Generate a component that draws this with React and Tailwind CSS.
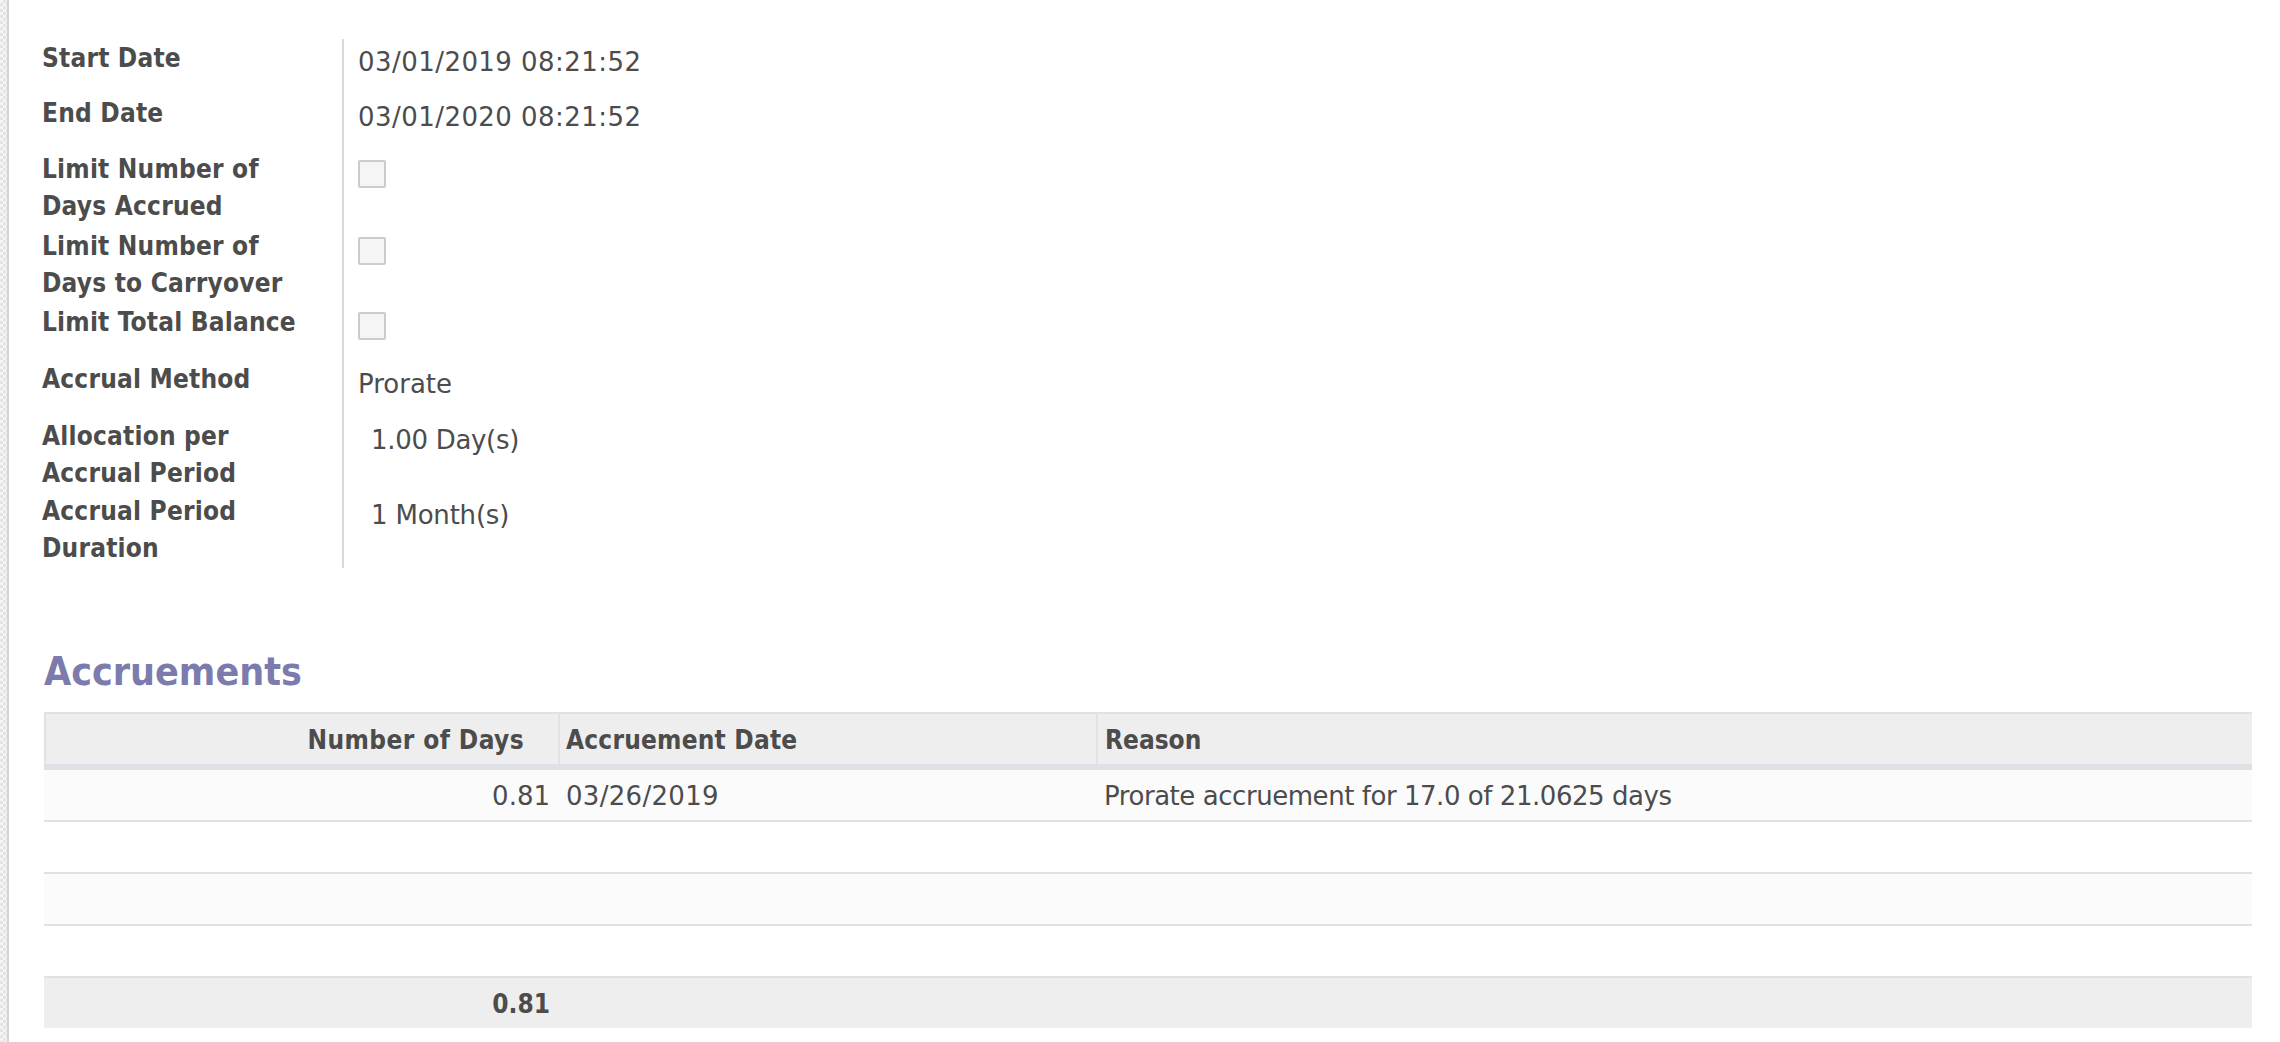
export default function App() {
  const boldFont = "font-['DejaVu_Sans_Condensed','DejaVu_Sans',sans-serif] font-bold";
  const rows = [
    { label: ['Start Date'], h: 'h-[55px]', value: <div className="pt-[5px] pl-[14px] tracking-[0.45px]">03/01/2019 08:21:52</div> },
    { label: ['End Date'], h: 'h-[56px]', value: <div className="pt-[5px] pl-[14px] tracking-[0.45px]">03/01/2020 08:21:52</div> },
    { label: ['Limit Number of', 'Days Accrued'], h: 'h-[77px]', value: <Checkbox mt="mt-[10px]" /> },
    { label: ['Limit Number of', 'Days to Carryover'], h: 'h-[76px]', value: <Checkbox mt="mt-[10px]" /> },
    { label: ['Limit Total Balance'], h: 'h-[57px]', value: <Checkbox mt="mt-[9px]" /> },
    { label: ['Accrual Method'], h: 'h-[57px]', value: <div className="pt-[6px] pl-[14px]">Prorate</div> },
    { label: ['Allocation per', 'Accrual Period'], h: 'h-[75px]', value: <div className="pt-[5px] pl-[27px] tracking-[-0.3px]">1.00 Day(s)</div> },
    { label: ['Accrual Period', 'Duration'], h: 'h-[76px]', value: <div className="pt-[5px] pl-[27px] tracking-[-0.2px]">1 Month(s)</div> },
  ];

  const bodyRows = [
    { bg: 'bg-[#fbfbfb]', days: '0.81', date: '03/26/2019', reason: 'Prorate accruement for 17.0 of 21.0625 days' },
    { bg: 'bg-white', days: '', date: '', reason: '' },
    { bg: 'bg-[#fbfbfb]', days: '', date: '', reason: '' },
    { bg: 'bg-white', days: '', date: '', reason: '' },
  ];

  return (
    <div className="flex min-h-[1042px] w-[2280px] bg-white text-[#4c4c4c] font-['DejaVu_Sans',sans-serif] text-[26px] leading-[37px]">
      <div className="w-[7px] shrink-0 bg-[repeating-conic-gradient(#e4e4e4_0%_25%,#f5f5f5_0%_50%)] bg-[length:6px_6px]" />
      <div className="w-[2px] shrink-0 bg-[#d3d3db]" />
      <div className="flex-1 pl-[33px]">
        <div className="pt-[39px] flex flex-col">
          {rows.map((r, i) => (
            <div key={i} className={`flex ${r.h}`}>
              <div className={`w-[300px] shrink-0 pt-[1px] tracking-[0.2px] ${boldFont}`}>
                {r.label.map((l, j) => (
                  <div key={j} className="whitespace-nowrap">{l}</div>
                ))}
              </div>
              <div className="border-l-2 border-[#d9d9d9] flex-none w-[600px]">{r.value}</div>
            </div>
          ))}
        </div>

        <div className={`mt-[82px] ml-[2px] h-[44px] leading-[44px] text-[39px] text-[#7c7bad] ${boldFont}`}>
          Accruements
        </div>

        <div className="mt-[18px] ml-[2px] w-[2208px]">
          <div className="flex h-[58px] border-t-2 border-b-[6px] border-[#dee2e6] bg-[#eeeeee]">
            <div className={`w-[516px] shrink-0 border-l-2 border-r-2 border-l-[#e2e2e2] border-r-[#e2e2e2] flex items-center justify-end pr-[34px] pt-[3px] tracking-[0.4px] ${boldFont}`}>
              Number of Days
            </div>
            <div className={`w-[538px] shrink-0 border-r-2 border-[#e2e2e2] flex items-center pl-[6px] pt-[3px] tracking-[0.2px] ${boldFont}`}>
              Accruement Date
            </div>
            <div className={`flex-1 flex items-center pl-[7px] pt-[3px] ${boldFont}`}>Reason</div>
          </div>
          {bodyRows.map((r, i) => (
            <div key={i} className={`flex h-[52px] border-b-2 border-[#dee2e6] ${r.bg}`}>
              <div className="w-[514px] shrink-0 flex items-center justify-end pr-[8px] pt-[3px]">{r.days}</div>
              <div className="w-[538px] shrink-0 flex items-center pl-[8px] pt-[3px] tracking-[0.3px]">{r.date}</div>
              <div className="flex-1 flex items-center pl-[8px] pt-[3px] tracking-[-0.45px]">{r.reason}</div>
            </div>
          ))}
          <div className="flex h-[50px] bg-[#eeeeee]">
            <div className={`w-[514px] shrink-0 flex items-center justify-end pr-[8px] pt-[3px] ${boldFont}`}>0.81</div>
            <div className="flex-1" />
          </div>
        </div>
      </div>
    </div>
  );
}

function Checkbox({ mt }) {
  return (
    <div className={`${mt} ml-[14px] w-[28px] h-[28px] border-2 border-[#cccccc] bg-[#f5f5f5] rounded-[2px]`} />
  );
}
